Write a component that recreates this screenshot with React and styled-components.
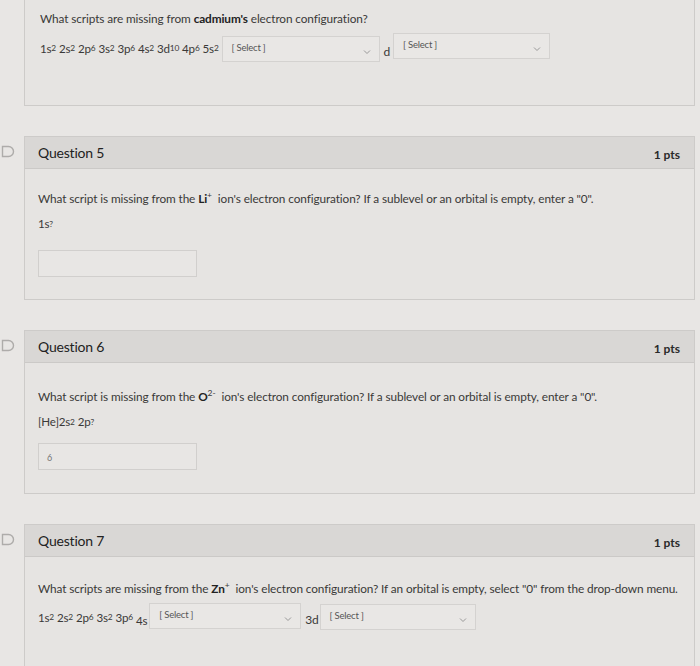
import React from "react";
import styled, { createGlobalStyle } from "styled-components";

const GlobalStyle = createGlobalStyle`
  body {
    margin: 0;
    background: #e8e6e4;
    font-family: Lato, "Open Sans", sans-serif;
    color: #333232;
  }
`;

const Page = styled.div`
  width: 700px;
  height: 666px;
  overflow: hidden;
  display: flex;
  flex-direction: column;
  gap: 30px;
`;

const Row = styled.div`
  display: flex;
  align-items: flex-start;
  padding-right: 5px;
`;

const Gutter = styled.div`
  width: 24px;
  flex-shrink: 0;
  display: flex;
  justify-content: flex-start;
  padding-top: ${(p) => p.$top || 9}px;
  padding-left: 1px;
  box-sizing: border-box;
`;

const Card = styled.div`
  flex: 1;
  border: 1px solid #cdcbc9;
  border-top: ${(p) => (p.$cut ? "none" : "1px solid #cdcbc9")};
  background: #e6e4e2;
  box-sizing: border-box;
  height: ${(p) => p.$h}px;
`;

const Header = styled.div`
  height: 31px;
  background: #d9d7d5;
  border-bottom: 1px solid #cbc9c7;
  display: flex;
  align-items: center;
  justify-content: space-between;
  padding: 0 14px 0 13px;
`;

const Title = styled.div`
  font-size: 14px;
  font-weight: 400;
  color: #222;
  letter-spacing: -0.2px;
`;

const Pts = styled.div`
  font-size: 12px;
  font-weight: 700;
  color: #2a2a2a;
  margin-top: 4px;
`;

const Body = styled.div`
  padding: ${(p) => p.$pad || "22px 13px 0 13px"};
  display: flex;
  flex-direction: column;
  gap: ${(p) => p.$gap || 12}px;
`;

const Prompt = styled.div`
  font-size: 11.8px;
  line-height: 14px;
  color: #3a3938;
  white-space: nowrap;
  letter-spacing: -0.1px;

  b {
    font-weight: 700;
    color: #222;
  }
`;

const Config = styled.div`
  display: flex;
  align-items: center;
  font-size: 11.6px;
  color: #3a3938;
  white-space: nowrap;
  letter-spacing: -0.2px;
`;

const Sup = styled.sup`
  font-size: 0.72em;
  line-height: 0;
  vertical-align: 0.55em;
  margin-right: 3px;
`;

const Label = styled.span`
  margin: ${(p) => p.$m || "0 3px"};
  align-self: ${(p) => (p.$low ? "flex-end" : "center")};
  padding-bottom: ${(p) => (p.$low ? 3 : 0)}px;
  font-size: ${(p) => p.$size || 11.6}px;
`;

const Select = styled.div`
  width: ${(p) => p.$w}px;
  flex-shrink: 0;
  height: 26px;
  border: 1px solid #d4d2d0;
  background: #e9e7e5;
  box-sizing: border-box;
  display: flex;
  justify-content: space-between;
  padding: 5px 8px 0 9px;
  font-size: 9.5px;
  color: #555;
  margin-top: ${(p) => p.$dy || 0}px;
`;

const Chevron = styled.svg`
  width: 8px;
  height: 8px;
  margin-top: 6px;
`;

const Input = styled.div`
  width: 159px;
  height: 27px;
  border: 1px solid #d1cfcd;
  background: #e8e6e4;
  box-sizing: border-box;
  padding: 8px 8px;
  font-size: 9px;
  color: #777;
  margin-top: ${(p) => p.$mt || 14}px;
`;

const Flag = () => (
  <svg width="14" height="13" viewBox="0 0 14 13">
    <path
      d="M1.5 1.5 H7.5 A5 5 0 0 1 7.5 11.5 H1.5 Z"
      fill="none"
      stroke="#aeacaa"
      strokeWidth="1.4"
    />
  </svg>
);

const DropDown = ({ w, dy }) => (
  <Select $w={w} $dy={dy}>
    <span>[ Select ]</span>
    <Chevron viewBox="0 0 8 8">
      <path d="M1 2.5 L4 5.5 L7 2.5" fill="none" stroke="#999" strokeWidth="1" />
    </Chevron>
  </Select>
);

const Orb = ({ o, n }) => (
  <>
    {o}
    <Sup>{n}</Sup>
  </>
);

const Question = ({ title, h, children, top }) => (
  <Row>
    <Gutter $top={top}>
      <Flag />
    </Gutter>
    <Card $h={h}>
      <Header>
        <Title>{title}</Title>
        <Pts>1 pts</Pts>
      </Header>
      {children}
    </Card>
  </Row>
);

export default function App() {
  return (
    <>
      <GlobalStyle />
      <Page>
        <Row>
          <Gutter />
          <Card $cut $h={106}>
            <Body $pad="12px 15px 0 15px" $gap={8}>
              <Prompt>
                What scripts are missing from <b>cadmium's</b> electron configuration?
              </Prompt>
              <Config>
                <Orb o="1s" n="2" />
                <Orb o="2s" n="2" />
                <Orb o="2p" n="6" />
                <Orb o="3s" n="2" />
                <Orb o="3p" n="6" />
                <Orb o="4s" n="2" />
                <Orb o="3d" n="10" />
                <Orb o="4p" n="6" />
                <Orb o="5s" n="2" />
                <DropDown w={158} dy={2} />
                <Label $low $m="0 3px 0 4px" $size={12}>d</Label>
                <DropDown w={157} dy={-4} />
              </Config>
            </Body>
          </Card>
        </Row>

        <Question title="Question 5" h={164}>
          <Body $pad="23px 13px 0 13px" $gap={11}>
            <Prompt>
              What script is missing from the <b>Li</b>
              <Sup>+</Sup> ion's electron configuration? If a sublevel or an orbital is empty, enter a "0".
            </Prompt>
            <Config>
              <Orb o="1s" n="?" />
            </Config>
          </Body>
          <Body $pad="0 13px" $gap={0}>
            <Input $mt={20} />
          </Body>
        </Question>

        <Question title="Question 6" h={164}>
          <Body $pad="27px 13px 0 13px" $gap={11}>
            <Prompt>
              What script is missing from the <b>O</b>
              <Sup>2-</Sup> ion's electron configuration? If a sublevel or an orbital is empty, enter a "0".
            </Prompt>
            <Config>
              [He]
              <Orb o="2s" n="2" />
              <Orb o="2p" n="?" />
            </Config>
          </Body>
          <Body $pad="0 13px" $gap={0}>
            <Input $mt={15}>6</Input>
          </Body>
        </Question>

        <Question title="Question 7" h={180}>
          <Body $pad="25px 13px 0 13px" $gap={8}>
            <Prompt>
              What scripts are missing from the <b>Zn</b>
              <Sup>+</Sup> ion's electron configuration? If an orbital is empty, select "0" from the drop-down menu.
            </Prompt>
            <Config>
              <Orb o="1s" n="2" />
              <Orb o="2s" n="2" />
              <Orb o="2p" n="6" />
              <Orb o="3s" n="2" />
              <Orb o="3p" n="6" />
              <Label $m="0 2px 0 0" $low>4s</Label>
              <DropDown w={152} dy={-2} />
              <Label $low $m="0 1px 0 4px" $size={12}>3d</Label>
              <DropDown w={156} dy={0} />
            </Config>
          </Body>
        </Question>
      </Page>
    </>
  );
}
